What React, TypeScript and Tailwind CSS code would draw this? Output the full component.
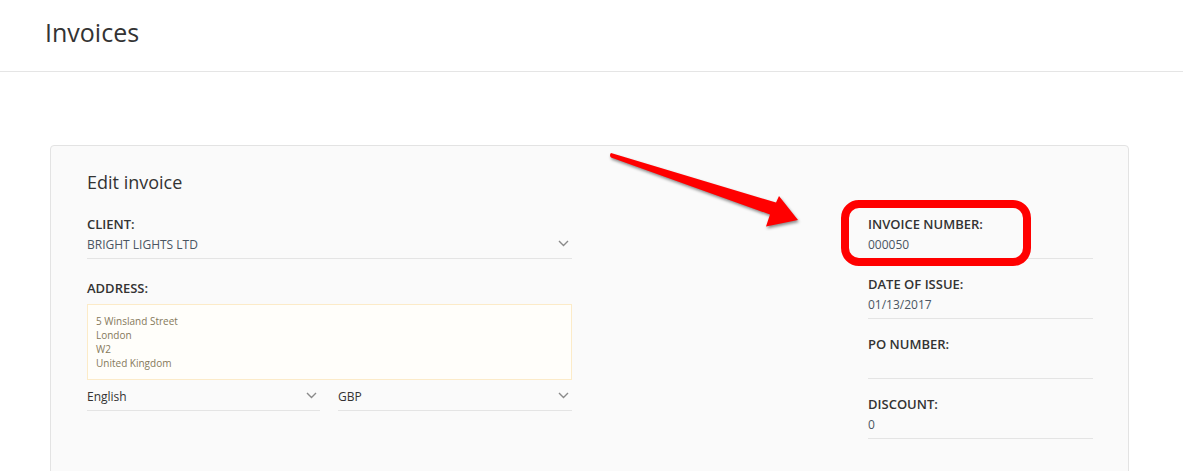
const Chevron = () => (
  <svg width="11" height="7" viewBox="0 0 11 7" className="mr-[3px] mt-[4px] shrink-0">
    <path d="M1 1 L5.5 5.5 L10 1" fill="none" stroke="#8a8a8a" strokeWidth="1.4" />
  </svg>
)

const Field = ({ label, value, select }: { label?: string; value: string; select?: boolean }) => (
  <div>
    {label && (
      <div className="text-[13px] font-semibold leading-[18px] text-[#333]">{label}</div>
    )}
    <div
      className={`${label ? 'mt-[3px]' : ''} flex h-[23px] items-start justify-between border-b border-[#e4e4e4] pb-[4px] text-[12px] leading-[18px] text-[#4a5562]`}
    >
      <span>{value}</span>
      {select && <Chevron />}
    </div>
  </div>
)

export default function App() {
  return (
    <div className="relative min-h-screen bg-white font-['Open_Sans',sans-serif]">
      <header className="h-[72px] border-b border-[#e5e5e5] pl-[45px] pt-[16px]">
        <h1 className="text-[25px] leading-[32px] text-[#333]">Invoices</h1>
      </header>

      <main className="px-[50px] pt-[73px]">
        <div className="w-[1079px] rounded border border-[#e3e3e3] bg-[#fafafa] pb-10 pl-[36px] pt-[22px]">
          <h2 className="text-[18px] leading-[28px] text-[#333]">Edit invoice</h2>

          <div className="mt-[19px] flex">
            <div className="w-[485px]">
              <Field label="CLIENT:" value="BRIGHT LIGHTS LTD" select />

              <div className="mt-[20px] text-[13px] font-semibold leading-[18px] text-[#333]">
                ADDRESS:
              </div>
              <div className="mt-[7px] border border-[#fcebc8] bg-[#fffefa] px-[8px] py-[9px] text-[10px] leading-[14px] text-[#85795b]">
                <div>5 Winsland Street</div>
                <div>London</div>
                <div>W2</div>
                <div>United Kingdom</div>
              </div>

              <div className="mt-[8px] flex gap-[18px]">
                <div className="w-[233px]">
                  <div className="flex h-[23px] items-start justify-between border-b border-[#e4e4e4] pb-[4px] text-[12px] leading-[18px] text-[#333]">
                    <span>English</span>
                    <Chevron />
                  </div>
                </div>
                <div className="w-[234px]">
                  <div className="flex h-[23px] items-start justify-between border-b border-[#e4e4e4] pb-[4px] text-[12px] leading-[18px] text-[#333]">
                    <span>GBP</span>
                    <Chevron />
                  </div>
                </div>
              </div>
            </div>

            <div className="ml-[296px] flex w-[225px] flex-col gap-[16px]">
              <Field label="INVOICE NUMBER:" value="000050" />
              <Field label="DATE OF ISSUE:" value="01/13/2017" />
              <Field label="PO NUMBER:" value="" />
              <Field label="DISCOUNT:" value="0" />
            </div>
          </div>
        </div>
      </main>

      {/* annotation overlay */}
      <svg
        className="pointer-events-none absolute left-0 top-0"
        width="1183"
        height="471"
        style={{ filter: 'drop-shadow(1px 2px 1.5px rgba(0,0,0,0.45))' }}
      >
        <path
          d="M611 153 L776 202.5 L779 196 L798 220 L766 226.5 L770 214.5 L611 157.5 Q609 155.2 611 153 Z"
          fill="#ff0000"
        />
      </svg>
      <div className="pointer-events-none absolute left-[841px] top-[200px] h-[66px] w-[190px] rounded-[18px] border-[8px] border-[#ff0000]" />
    </div>
  )
}
